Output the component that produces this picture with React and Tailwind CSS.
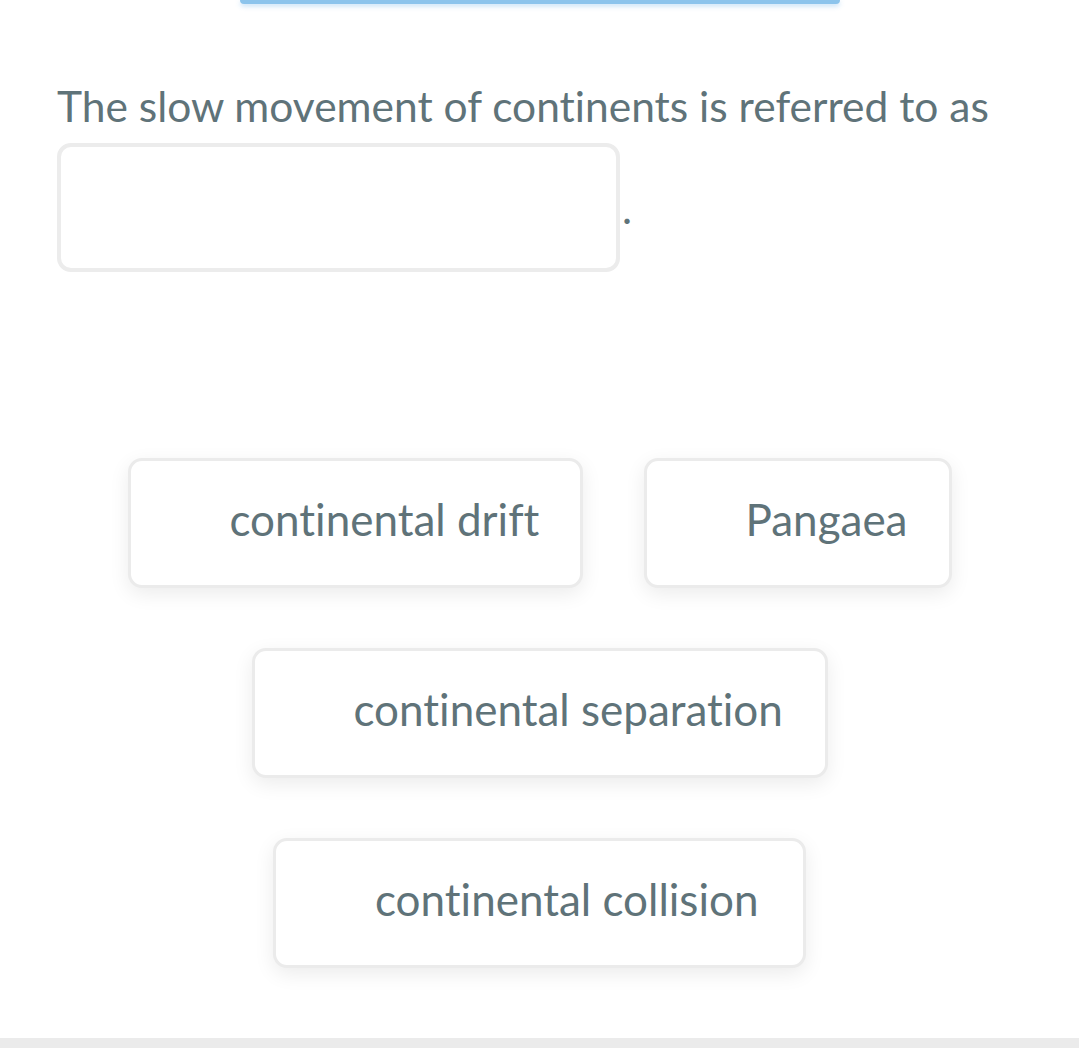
const options = [
  { label: "continental drift", width: "w-[455px]" },
  { label: "Pangaea", width: "w-[308px]" },
  { label: "continental separation", width: "w-[576px]" },
  { label: "continental collision", width: "w-[533px]" },
];

const Option = ({ label, width }) => (
  <button
    className={`${width} h-[130px] flex items-center pl-[99px] pb-[8px] bg-white border-[3px] border-[#ebebeb] rounded-[14px] shadow-[0_6px_20px_rgba(0,0,0,0.08)] text-left`}
  >
    <span className="text-[44px] leading-none whitespace-nowrap">{label}</span>
  </button>
);

export default function App() {
  return (
    <div
      className="h-[1048px] w-full flex flex-col bg-white text-[#5f7379] text-[42.5px] [font-variant-ligatures:none]"
      style={{ fontFamily: "Lato, 'Noto Sans', sans-serif" }}
    >
      <div className="mx-auto w-[600px] h-[4px] rounded-b-full bg-[#8cc4ec] shadow-[0_2px_5px_rgba(110,180,235,0.45)]" />

      <div className="mt-[70px] px-[57px]">
        <p className="leading-[64px] whitespace-nowrap">
          The slow movement of continents is referred to as
        </p>
        <div className="mt-[5px] flex items-start">
          <div className="w-[563px] h-[129px] border-[4px] border-[#ececec] rounded-[14px] bg-white" />
          <span className="ml-[2px] mt-[44px] leading-none">.</span>
        </div>
      </div>

      <div className="mt-[186px] flex flex-wrap justify-center gap-x-[61px] gap-y-[60px]">
        {options.map((o) => (
          <Option key={o.label} {...o} />
        ))}
      </div>

      <div className="mt-auto h-[10px] bg-[#ebebeb]" />
    </div>
  );
}
